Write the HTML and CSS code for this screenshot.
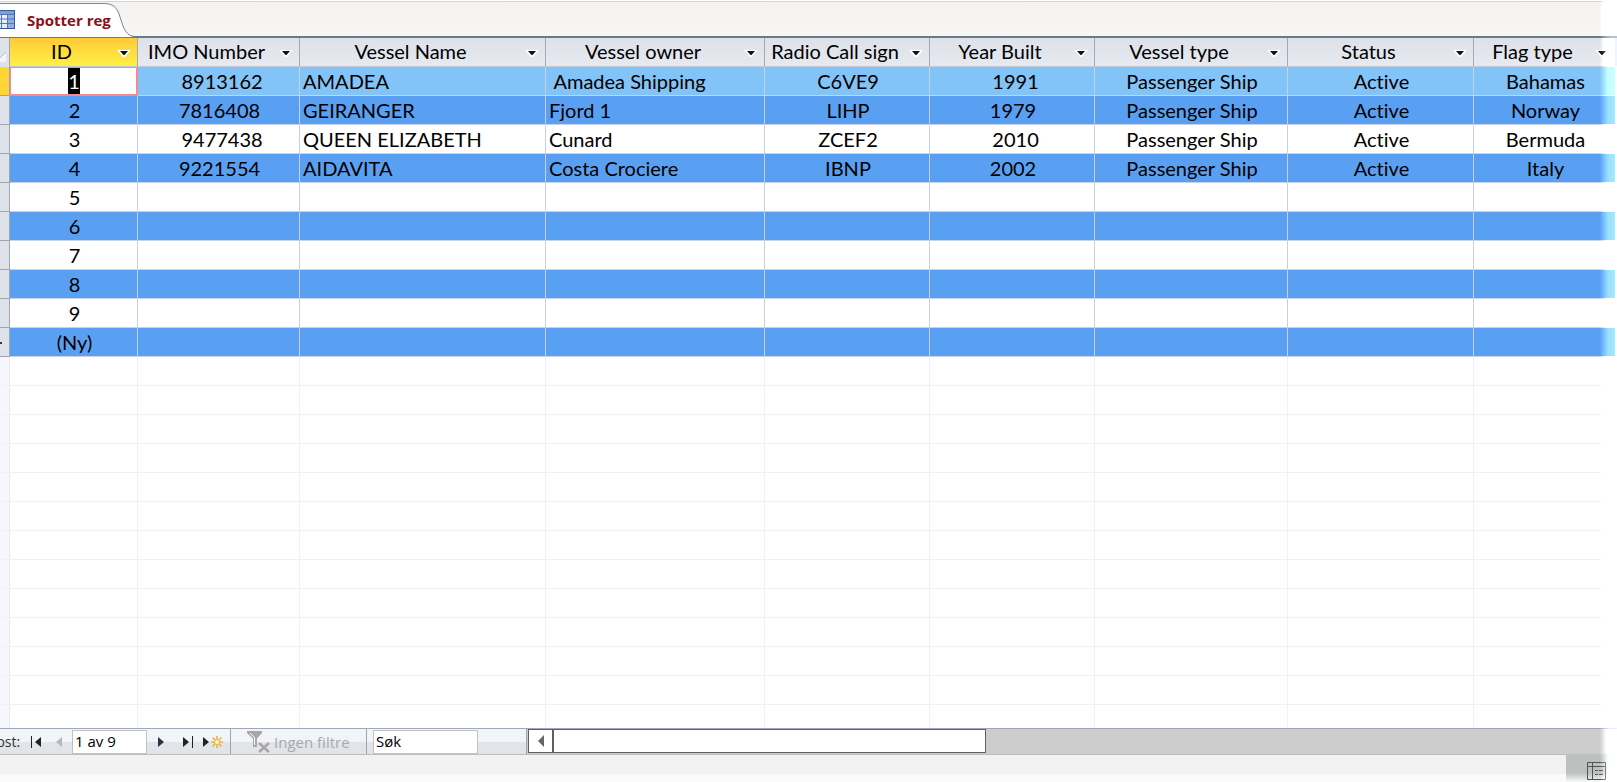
FILE: index.html
```html
<!DOCTYPE html>
<html lang="no">

<head>
    <meta charset="UTF-8">
    <meta name="viewport" content="width=device-width, initial-scale=1.0">
    <title>Spotter reg</title>
    <link rel="stylesheet" href="styles.css">
</head>

<body>
    <div class="tabs">
        <div class="tab">
            <svg class="tab-shape" width="138" height="36" viewBox="0 0 138 36">
                <path d="M0 2.5H104C113 2.5 117 7 119 13C123 24 124 34 134 36H0Z" fill="#fff" />
                <path d="M0 2.5H104C113 2.5 117 7 119 13C123 24 124 34 134 35.5" fill="none" stroke="#7b868f" />
            </svg>
            <svg class="tab-icon" width="16" height="20" viewBox="0 0 16 20">
                <rect x="-4" y="0.5" width="18.5" height="18" fill="#e6eefb" stroke="#3a5a95" />
                <rect x="-4" y="1" width="18" height="3" fill="#7d9fd6" />
                <rect x="8" y="4" width="6" height="14" fill="#8fb0e4" />
                <path d="M0 4.5H14M0 9H14M0 13.5H14M1.5 4V18M7.5 4V18" stroke="#5577b5" fill="none" />
            </svg>
            <span class="tab-title">Spotter reg</span>
        </div>
    </div>

    <main class="sheet">
        <table class="grid">
            <colgroup>
                <col class="c-sel">
                <col class="c-id">
                <col class="c-imo">
                <col class="c-name">
                <col class="c-owner">
                <col class="c-call">
                <col class="c-year">
                <col class="c-type">
                <col class="c-status">
                <col class="c-flag">
                <col>
            </colgroup>
            <thead>
                <tr id="head"></tr>
            </thead>
            <tbody id="rows"></tbody>
        </table>
    </main>

    <footer class="nav">
        <div class="record">
            <label for="post">Post:</label>
            <button class="btn" aria-label="Første post"><svg width="12" height="12" viewBox="0 0 12 12"><path d="M1.5 0V12" stroke="#222" /><path d="M11 1V11L5 6Z" fill="#222" /></svg></button>
            <button class="btn prev" aria-label="Forrige post"><svg width="8" height="12" viewBox="0 0 8 12"><path d="M7 1V11L1 6Z" fill="#b5b9bd" /></svg></button>
            <input class="box" id="post" type="text" value="1 av 9">
            <button class="btn next" aria-label="Neste post"><svg width="8" height="12" viewBox="0 0 8 12"><path d="M1 1V11L7 6Z" fill="#2a3440" /></svg></button>
            <button class="btn last" aria-label="Siste post"><svg width="12" height="12" viewBox="0 0 12 12"><path d="M1 1V11L7 6Z" fill="#222" /><path d="M10.5 0V12" stroke="#222" /></svg></button>
            <button class="btn" aria-label="Ny post"><svg width="20" height="12" viewBox="0 0 20 12"><path d="M0 1V11L6 6Z" fill="#222" /><path d="M14 0V3M14 9V12M8 6H11M17 6H20M9.5 1.5L12 4M16 8L18.5 10.5M18.5 1.5L16 4M12 8L9.5 10.5" stroke="#f0b040" stroke-width="1.6" /><circle cx="14" cy="6" r="2.5" fill="#fff3d0" stroke="#f0b040" /></svg></button>
        </div>
        <button class="filter" disabled>
            <svg width="24" height="22" viewBox="0 0 24 22">
                <path d="M0 0H15V2L10 7.500V16H6V7.500L0 2Z" fill="#a9a5a9" />
                <path d="M3 2L7.500 6.500V14" fill="none" stroke="#fff" />
                <path d="M12 12L22 21M22 12L12 21" stroke="#a9a5a9" stroke-width="2.500" />
            </svg>
            Ingen filtre
        </button>
        <div class="search">
            <input class="box" type="text" value="Søk" aria-label="Søk">
        </div>
        <div class="scroll">
            <button class="scroll-btn" aria-label="Rull til venstre"><svg width="8" height="12" viewBox="0 0 8 12"><path d="M7 0V12L1 6Z" fill="#666" /></svg></button>
            <div class="thumb"></div>
        </div>
    </footer>

    <div class="status">
        <button class="view" aria-label="Dataarkvisning">
            <svg width="19" height="18" viewBox="0 0 19 18">
                <path d="M0.500 0.500H18.500V17.500H0.500ZM5.500 0V18M0 4.500H19M8 8.500H11M12 8.500H16M8 12.500H11M12 12.500H16" fill="none" stroke="#505550" />
            </svg>
        </button>
    </div>

    <div class="edge"></div>

    <script src="script.js"></script>
</body>

</html>
```
FILE: styles.css
```css
* {
    box-sizing: border-box;
}

body {
    margin: 0;
    height: 100vh;
    display: flex;
    flex-direction: column;
    overflow: hidden;
    background: #fff;
    color: #000;
    font-family: "Open Sans", sans-serif;
}

button {
    border: 0;
    padding: 0;
    background: none;
    font: inherit;
    color: inherit;
}

/* tab strip */
.tabs {
    height: 38px;
    flex: none;
    background: linear-gradient(#fff 1px, #d5d4d2 1px, #d5d4d2 2px, #f3f2f0 2px, #f7f6f4);
    border-bottom: 2px solid #6c7a86;
}

.tab {
    position: relative;
    width: 138px;
    height: 38px;
    padding-top: 2px;
    display: flex;
    align-items: center;
    gap: 11px;
}

.tab-shape {
    position: absolute;
    left: 0;
    top: 0;
    height: 38px;
}

.tab-icon,
.tab-title {
    position: relative;
}

.tab-title {
    font-size: 15px;
    font-weight: 700;
    color: #8b1018;
}

/* datasheet */
.sheet {
    flex: 1;
    min-height: 0;
    overflow: hidden;
}

.grid {
    width: 100%;
    table-layout: fixed;
    border-collapse: separate;
    border-spacing: 0;
    font-family: Lato, sans-serif;
    font-size: 20px;
    font-variant-ligatures: none;
    line-height: 28px;
}

.c-sel { width: 10px; }
.c-id { width: 128px; }
.c-imo { width: 162px; }
.c-name { width: 246px; }
.c-owner { width: 219px; }
.c-call { width: 165px; }
.c-year { width: 165px; }
.c-type { width: 193px; }
.c-status { width: 186px; }
.c-flag { width: 142px; }

.grid th,
.grid td {
    height: 29px;
    padding: 0 1px 0 3px;
    border-right: 1px solid #c5cfe6;
    border-bottom: 1px solid #c9d3e8;
    text-align: center;
    font-weight: 400;
    white-space: pre;
    overflow: hidden;
}

.grid thead th {
    position: relative;
    padding: 0 28px 2px 4px;
    line-height: 26px;
    background: linear-gradient(#dde1e8, #e6e9f0);
    border-right-color: #a3a9b4;
    border-bottom-color: #c3cad6;
}

.grid thead th.active {
    background: linear-gradient(#ffca36, #fff045);
}

.arrow {
    position: absolute;
    right: 6px;
    top: 11px;
    display: flex;
}

.grid td.left {
    text-align: left;
}

.grid .sel {
    padding: 0;
    background: #dee2ea;
    border-right-color: #a0a5ad;
    border-bottom-color: #a0a5ad;
    line-height: 20px;
}

.grid thead .sel {
    padding: 0;
    border-bottom-color: #dee2ea;
}

.corner {
    position: absolute;
    left: 0;
    top: 14px;
}

.sel svg {
    display: block;
}

.blue td {
    background: #5aa0f2;
}

.current td {
    background: #82c4f8;
}

.grid .current .sel {
    background: #ffd535;
}

.grid .current .editing {
    background: #fff;
    padding: 0 2px 0 3px;
    border: solid #f58b8f;
    border-width: 1px 2px 2px 1px;
    line-height: 26px;
}

.editing mark {
    display: inline-block;
    height: 26px;
    background: #000;
    color: #fff;
}

.empty td {
    border-color: #f0f1f5;
}

.grid .empty .sel {
    background: #f6f6fd;
    border-right-color: #ebebf0;
    border-bottom-color: #f0f1f8;
}

/* record navigation */
.nav {
    height: 27px;
    flex: none;
    display: flex;
    background: #cdcdcd;
    border-top: 1px solid #a2a7b8;
    border-bottom: 1px solid #bcbfc0;
    font-size: 15px;
}

.record,
.filter,
.search {
    display: flex;
    align-items: center;
    background: linear-gradient(#f2f5f7 50%, #e1e5e9 50%);
    border-right: 1px solid #9ea3b8;
}

.record {
    width: 231px;
}

.record label {
    margin-left: -12px;
    width: 34px;
    margin-right: 8px;
    font-size: 14px;
    color: #333;
}

.btn {
    display: flex;
}

.prev {
    margin: 0 9px 0 13px;
}

.next {
    margin: 0 17px 0 10px;
}

.last {
    margin-right: 9px;
}

.box {
    width: 75px;
    height: 24px;
    padding: 0 2px 2px;
    border: 1px solid #c0c3c3;
    background: #fff;
    color: #000;
    font: inherit;
}

.filter {
    width: 136px;
    padding-left: 16px;
    gap: 3px;
    color: #a6a9b0;
}

.search {
    width: 160px;
    padding-left: 6px;
}

.search .box {
    width: 105px;
}

.scroll {
    flex: 1;
    display: flex;
    padding-left: 1px;
}

.scroll-btn {
    width: 25px;
    height: 24px;
    display: flex;
    align-items: center;
    justify-content: center;
    border: 1px solid #606060;
    background: #fff;
}

.thumb {
    width: 433px;
    height: 24px;
    border: 1px solid #606060;
    background: #fff;
}

/* status bar */
.status {
    height: 27px;
    flex: none;
    display: flex;
    justify-content: flex-end;
    background: linear-gradient(#f2f2f2 18px, #fbfbfb 20px);
}

.view {
    width: 51px;
    padding: 7px 0 0 21px;
    display: flex;
    background: linear-gradient(#bcc1bf 18px, #fafafa);
}

/* bright right margin */
.edge {
    position: fixed;
    top: 0;
    right: 0;
    bottom: 0;
    width: 17px;
    background: linear-gradient(to right, #000, #404040 8px, #4c4c4c);
    mix-blend-mode: plus-lighter;
    pointer-events: none;
}
```
FILE: script.js
```js
const columns = ["ID", "IMO Number", "Vessel Name", "Vessel owner", "Radio Call sign", "Year Built", "Vessel type", "Status", "Flag type"]

const vessels = [
    ["1", " 8913162", "AMADEA", " Amadea Shipping", "C6VE9", " 1991", "Passenger Ship", "Active", "Bahamas"],
    ["2", "7816408", "GEIRANGER", "Fjord 1", "LIHP", "1979", "Passenger Ship", "Active", "Norway"],
    ["3", " 9477438", "QUEEN ELIZABETH", "Cunard", "ZCEF2", " 2010", "Passenger Ship", "Active", "Bermuda"],
    ["4", "9221554", "AIDAVITA", "Costa Crociere", "IBNP", "2002", "Passenger Ship", "Active", "Italy"],
    ["5"], ["6"], ["7"], ["8"], ["9"], ["(Ny)"]
]

const arrow = '<svg class="arrow" width="14" height="8" viewBox="0 0 14 8"><path d="M0 1H14L8 8H6Z" fill="#fff"/><path d="M3 2H11L7.500 6H6.500Z" fill="#111"/></svg>'
const corner = '<svg class="corner" width="8" height="10" viewBox="0 0 8 10"><path d="M6 0V10H0V6Z" fill="#f4f5f8"/><path d="M0 6L6 0" stroke="#b4bac4"/></svg>'

let head = '<th class="sel">' + corner + '</th>'
columns.forEach(function (name, i) {
    head += '<th' + (i == 0 ? ' class="active"' : '') + '>' + name + arrow + '</th>'
})
document.getElementById("head").innerHTML = head + '<th></th>'

let rows = ""
vessels.forEach(function (vessel, r) {
    let kind = r == 0 ? "current" : r % 2 == 1 ? "blue" : ""
    rows += '<tr class="' + kind + '"><th class="sel">'
    if (vessel[0] == "(Ny)") {
        rows += '<svg width="3" height="3"><rect y="1" width="2" height="2" fill="#333"/></svg>'
    }
    rows += '</th>'
    for (let c = 0; c < columns.length; c++) {
        let text = vessel[c] || ""
        if (r == 0 && c == 0) {
            rows += '<td class="editing"><mark>' + text + '</mark></td>'
        } else {
            rows += '<td' + (c == 2 || c == 3 ? ' class="left"' : '') + '>' + text + '</td>'
        }
    }
    rows += '<td></td></tr>'
})

// unused rows below the new-record line
for (let i = 0; i < 13; i++) {
    rows += '<tr class="empty"><th class="sel"></th>' + '<td></td>'.repeat(columns.length + 1) + '</tr>'
}
document.getElementById("rows").innerHTML = rows
```
